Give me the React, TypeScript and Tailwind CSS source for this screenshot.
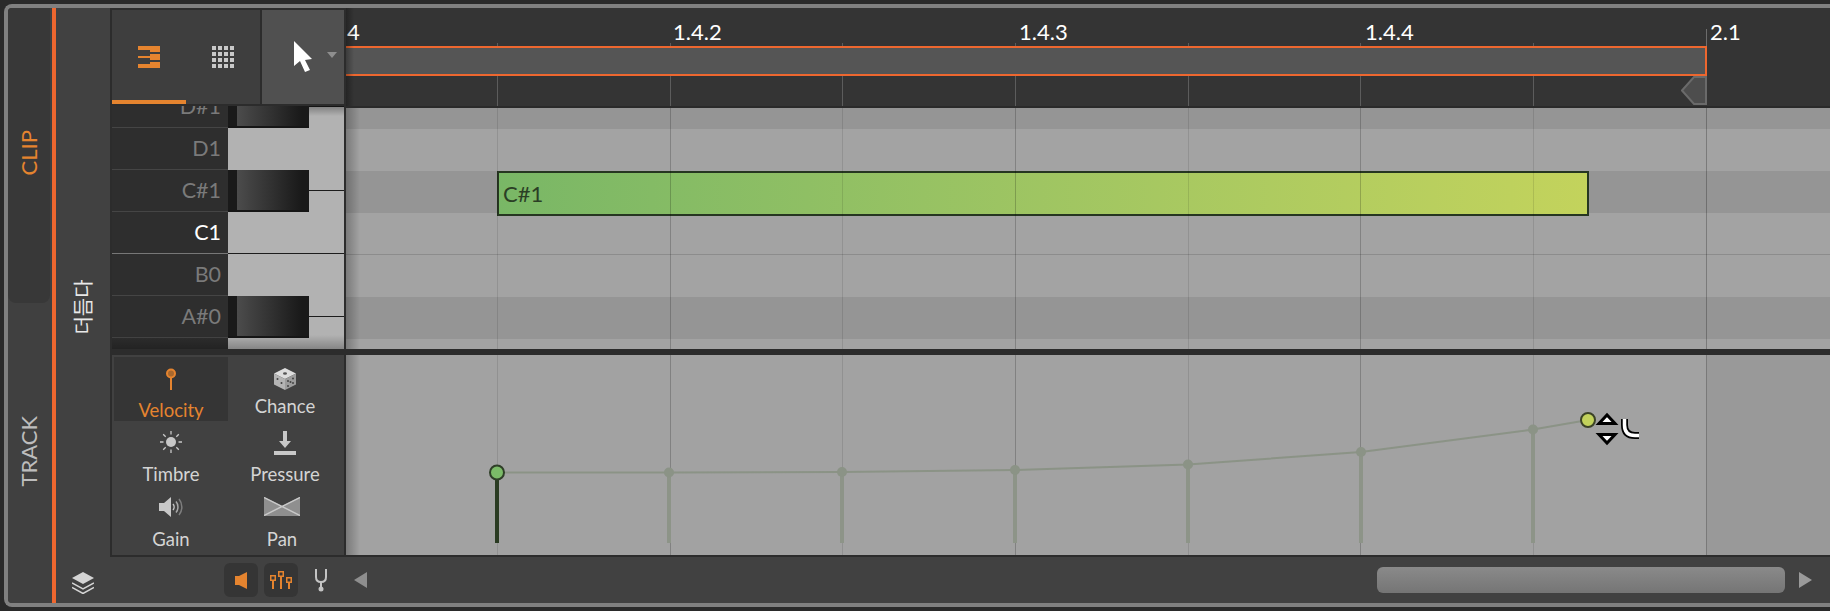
import React from "react";

const rows = [
  { n: "D#1", black: true, cls: "bg-[#959595]" },
  { n: "D1", black: false, cls: "bg-[#a3a3a3]" },
  { n: "C#1", black: true, cls: "bg-[#959595]" },
  { n: "C1", black: false, cls: "bg-[#a3a3a3] border-b border-[#8c8c8c]", active: true },
  { n: "B0", black: false, cls: "bg-[#a3a3a3]" },
  { n: "A#0", black: true, cls: "bg-[#959595]" },
  { n: "", black: false, cls: "bg-[#a3a3a3]" },
];

const gridLines = [
  "bg-black/10", "bg-black/20", "bg-black/10", "bg-black/20",
  "bg-black/10", "bg-black/20", "bg-black/10", "bg-black/25",
];

function GridLines() {
  return (
    <div className="absolute inset-0 flex pl-[151px] pointer-events-none">
      {gridLines.map((c, i) => (
        <div key={i} className="w-[172.7px] shrink-0 h-full">
          <div className={`w-px h-full ${c}`} />
        </div>
      ))}
    </div>
  );
}

function KeyRow({ n, black, active }: { n: string; black: boolean; active?: boolean }) {
  return (
    <div className="flex h-[42px]">
      <div
        className={`w-[116px] bg-[#2e2e2e] flex items-center justify-end pr-[7px] pt-[1px] text-[21.5px] leading-none border-b ${
          active ? "border-[#777777] text-white" : "border-[#454545] text-[#7a7a7a]"
        }`}
      >
        {n}
      </div>
      <div className={`flex-1 flex bg-[#b2b2b2] ${active ? "border-b border-[#1c1c1c]" : ""}`}>
        {black && n ? (
          <>
            <div className="w-[81px] h-full flex border-b-2 border-[#161616] bg-[#1a1a1a]">
              <div className="w-[9px]" />
              <div className="flex-1 bg-gradient-to-r from-[#4c4c4c] via-[#303030] via-50% to-[#191919] to-90%" />
            </div>
            <div className="flex-1 flex flex-col pt-[20px]">
              <div className="h-px bg-[#1c1c1c]" />
            </div>
          </>
        ) : null}
      </div>
    </div>
  );
}

function PianoIcon() {
  return (
    <svg width="22" height="22" viewBox="0 0 22 22" fill="#e5842f">
      <path d="M0 0H22V6H12V4H0Z" />
      <path d="M0 10H12V8H22V14H12V12H0Z" />
      <path d="M0 18H12V16H22V22H0Z" />
    </svg>
  );
}

function GridIcon() {
  const cells: React.ReactNode[] = [];
  for (let r = 0; r < 4; r++)
    for (let c = 0; c < 4; c++)
      cells.push(<rect key={`${r}-${c}`} x={c * 6} y={r * 6} width="4" height="4" />);
  return (
    <svg width="22" height="22" viewBox="0 0 22 22" fill="#c9c9c9">
      {cells}
    </svg>
  );
}

function Tool() {
  return (
    <div className="w-[82px] bg-[#505050] flex items-center pl-[32px] gap-[14px] pb-[4px]">
      <svg width="19" height="31" viewBox="0 0 19 31" fill="#ffffff" className="mt-[2px]">
        <path d="M0 0L18 18L11 19L16 29L11 31L6 20L0 25Z" />
      </svg>
      <svg width="10" height="6" viewBox="0 0 10 6" fill="#8e8e8e">
        <path d="M0 0H10L5 6Z" />
      </svg>
    </div>
  );
}

function Label({ children, className = "text-[#d4d4d4]" }: { children: React.ReactNode; className?: string }) {
  return <div className={`text-[18.5px] leading-[20px] ${className}`}>{children}</div>;
}

function Dice() {
  return (
    <svg width="22" height="22" viewBox="0 0 22 22">
      <path d="M11 0L22 5.5L11 11L0 5.5Z" fill="#dddddd" />
      <path d="M0 5.5L11 11V22L0 16.5Z" fill="#b4b4b4" />
      <path d="M22 5.5L11 11V22L22 16.5Z" fill="#9c9c9c" />
      <ellipse cx="11" cy="5.5" rx="2" ry="1.2" fill="#555" />
      <circle cx="3.5" cy="11" r="1" fill="#444" />
      <circle cx="7.5" cy="15" r="1" fill="#444" />
      <g fill="#444">
        <circle cx="14" cy="13" r="1" />
        <circle cx="19" cy="10.5" r="1" />
        <circle cx="14" cy="18" r="1" />
        <circle cx="19" cy="15" r="1" />
        <circle cx="16.5" cy="14" r="1" />
      </g>
    </svg>
  );
}

function Sun() {
  return (
    <svg width="22" height="22" viewBox="0 0 22 22" stroke="#c8c8c8" strokeWidth="1.3" fill="#c8c8c8">
      <circle cx="11" cy="11" r="5" stroke="none" />
      <path d="M11 0V3.5M11 18.5V22M0 11H3.5M18.5 11H22M3.2 3.2L5.7 5.7M16.3 16.3L18.8 18.8M3.2 18.8L5.7 16.3M16.3 5.7L18.8 3.2" fill="none" />
    </svg>
  );
}

function Pressure() {
  return (
    <svg width="22" height="24" viewBox="0 0 22 24" fill="#c8c8c8">
      <path d="M9 0H13V10H17L11 17L5 10H9Z" />
      <rect x="0" y="20" width="22" height="4" />
    </svg>
  );
}

function Speaker() {
  return (
    <svg width="24" height="20" viewBox="0 0 24 20" fill="none">
      <path d="M0 6H5L12 0V20L5 14H0Z" fill="#c8c8c8" />
      <path d="M14 7C15.4 8.6 15.4 11.4 14 13" stroke="#c8c8c8" strokeWidth="1.5" />
      <path d="M17 4.5C19.6 7.5 19.6 12.5 17 15.5" stroke="#a8a8a8" strokeWidth="1.5" />
      <path d="M20 2C23.8 6.5 23.8 13.5 20 18" stroke="#7e7e7e" strokeWidth="1.5" />
    </svg>
  );
}

function Pan() {
  return (
    <svg width="36" height="19" viewBox="0 0 36 19">
      <path d="M0 0L18 9L36 0V19H0Z" fill="#8f8f8f" />
      <path d="M0 0.5L36 18.5M0 18.5L36 0.5" stroke="#c8c8c8" strokeWidth="1.5" fill="none" />
    </svg>
  );
}

function ValueIcon() {
  return (
    <svg width="12" height="22" viewBox="0 0 12 22" fill="none">
      <circle cx="6" cy="5.5" r="4" stroke="#e5842f" strokeWidth="2" fill="#a8682e" />
      <rect x="5" y="9" width="2" height="13" fill="#e5842f" />
    </svg>
  );
}

function ExpressionPanel() {
  return (
    <div className="h-[202px] bg-[#2c2c2c] pb-[2px]">
      <div className="h-full bg-[#414141] pt-[2px] pl-[2px] grid grid-cols-[114px_114px] grid-rows-[64px_66px_66px]">
        <div className="bg-[#353535] flex flex-col items-center pt-[11px] gap-[10px]">
          <ValueIcon />
          <Label className="text-[#e5842f]">Velocity</Label>
        </div>
        <div className="flex flex-col items-center pt-[11px] gap-[6px]">
          <Dice />
          <Label>Chance</Label>
        </div>
        <div className="flex flex-col items-center pt-[10px] gap-[11px]">
          <Sun />
          <Label>Timbre</Label>
        </div>
        <div className="flex flex-col items-center pt-[10px] gap-[9px]">
          <Pressure />
          <Label>Pressure</Label>
        </div>
        <div className="flex flex-col items-center pt-[10px] gap-[12px]">
          <Speaker />
          <Label>Gain</Label>
        </div>
        <div className="flex flex-col items-center pt-[10px] gap-[13px] pr-[6px]">
          <Pan />
          <Label>Pan</Label>
        </div>
      </div>
    </div>
  );
}

const pts = [
  [151, 117.5],
  [323, 117.5],
  [496, 117],
  [669, 115],
  [842, 109.5],
  [1015, 97],
  [1187, 74.5],
];

function VelocityChart() {
  const line = [...pts, [1242, 65]].map((p) => p.join(",")).join(" ");
  const curve = "M1278.5 64V70C1278.5 77 1282 80.5 1289 80.5H1293";
  return (
    <svg className="absolute inset-0" width="1484" height="200" viewBox="0 0 1484 200" fill="none">
      <polyline points={line} stroke="#8b9386" strokeWidth="2" />
      {pts.slice(1).map(([x, y]) => (
        <g key={x}>
          <rect x={x - 2} y={y} width="4" height={188 - y} fill="#8d9488" />
          <circle cx={x} cy={y} r="5" fill="#8b9386" />
        </g>
      ))}
      <rect x="149" y="117" width="4" height="71" fill="#2a3b22" />
      <circle cx="151" cy="117.5" r="7" fill="#7bbb68" stroke="#2f3f28" strokeWidth="2" />
      <circle cx="1242" cy="65" r="7" fill="#c2d25c" stroke="#3b4226" strokeWidth="2" />
      <g stroke="#000000" strokeWidth="3" fill="#ffffff" strokeLinejoin="miter">
        <path d="M1253 68.5L1261 60L1269 68.5Z" />
        <path d="M1253 79.5L1261 88L1269 79.5Z" />
      </g>
      <path d={curve} stroke="#000000" strokeWidth="7" />
      <path d={curve} stroke="#ffffff" strokeWidth="3.5" />
    </svg>
  );
}

function Ruler() {
  const labels = ["4", "1.4.2", "1.4.3", "1.4.4", "2.1"];
  const widths = ["w-[326px]", "w-[346px]", "w-[346px]", "w-[345px]", "w-[100px]"];
  return (
    <div className="relative h-[100px] shrink-0 bg-[#343434] border-b-2 border-[#2a2a2a] flex flex-col">
      <div className="absolute inset-0 flex pl-[151px] pt-[35px]">
        {gridLines.map((_, i) => (
          <div key={i} className="w-[172.7px] shrink-0 h-full">
            <div className={`w-px h-full ${i === 7 ? "bg-[#6c6c6c] -mt-[14px]" : "bg-[#5c5c5c]"}`} />
          </div>
        ))}
      </div>
      <div className="relative flex h-[38px] pl-px items-center pt-[10px] text-[22px] text-white">
        {labels.map((l, i) => (
          <div key={l} className={`${widths[i]} shrink-0 leading-none`}>
            {l}
          </div>
        ))}
      </div>
      <div className="relative flex">
        <div className="w-[1361px] h-[30px] bg-[#555555] border-y-2 border-r-2 border-[#ee672f] shrink-0" />
      </div>
      <div className="relative flex justify-end w-[1361px]">
        <svg width="26" height="29" viewBox="0 0 26 29" fill="#4d4d4d" stroke="#6a6a6a" strokeWidth="2">
          <path d="M25 1H13L1 14.5L13 28H25Z" />
        </svg>
      </div>
      <div className="absolute left-0 top-0 bottom-0 w-[8px] bg-gradient-to-r from-black/30 to-transparent" />
    </div>
  );
}

export default function App() {
  return (
    <div className="w-[1830px] h-[611px] bg-[#2a2a2a] py-1 pl-1 overflow-hidden [font-family:Lato,'Noto_Sans_CJK_KR',sans-serif]">
      <div className="h-full flex border-y-4 border-l-4 border-[#808080] rounded-l-[8px] bg-[#414141] overflow-hidden">
        {/* side tabs */}
        <div className="w-[44px] shrink-0 flex flex-col bg-[#404040]">
          <div className="w-[42px] h-[295px] shrink-0 bg-[#383838] rounded-b-[8px] flex items-center justify-center pb-[5px]">
            <span className="[writing-mode:vertical-rl] rotate-180 text-[22px] leading-none text-[#e5842f]">CLIP</span>
          </div>
          <div className="flex-1 flex items-center justify-center pb-[4px] pr-[2px]">
            <span className="[writing-mode:vertical-rl] rotate-180 text-[22px] leading-none text-[#bdbdbd]">TRACK</span>
          </div>
        </div>
        <div className="w-[4px] shrink-0 bg-[#ee672f]" />

        <div className="flex-1 min-w-0 flex flex-col">
          <div className="flex h-[549px] shrink-0">
            {/* vertical title */}
            <div className="w-[54px] shrink-0 flex items-center justify-center pt-[48px]">
              <span className="-rotate-90 whitespace-nowrap text-[20px] leading-none text-[#e8e8e8]">더듬다</span>
            </div>

            {/* keyboard column */}
            <div className="w-[236px] shrink-0 flex flex-col bg-[#2c2c2c] px-[2px]">
              <div className="h-[98px] shrink-0 pt-[2px] pb-[2px] flex gap-[2px]">
                <div className="w-[148px] bg-[#3e3e3e] relative flex">
                  <div className="w-[74px] flex items-center justify-center border-b-4 border-[#e5842f] pt-[4px]">
                    <PianoIcon />
                  </div>
                  <div className="w-[74px] flex items-center justify-center">
                    <GridIcon />
                  </div>
                </div>
                <Tool />
              </div>
              <div className="relative h-[243px] shrink-0 overflow-hidden">
                <div className="-mt-[20px]">
                  {rows.map((r) => (
                    <KeyRow key={r.n} n={r.n} black={r.black} active={r.active} />
                  ))}
                </div>
                <div className="absolute right-0 top-0 w-[35px] h-[10px] bg-gradient-to-b from-black/30 to-transparent" />
                <div className="absolute inset-x-0 bottom-0 h-[14px] bg-gradient-to-b from-transparent to-black/25" />
              </div>
              <div className="h-[6px] shrink-0 bg-[#2c2c2c]" />
              <ExpressionPanel />
            </div>

            {/* timeline column */}
            <div className="flex-1 min-w-0 flex flex-col">
              <Ruler />
              <div className="relative h-[241px] shrink-0 overflow-hidden">
                <div className="-mt-[21px]">
                  {rows.map((r) => (
                    <div key={r.n} className={`h-[42px] ${r.cls}`} />
                  ))}
                </div>
                <div className="absolute left-[151px] top-[63px] w-[1092px] h-[45px] bg-gradient-to-r from-[#79b766] to-[#c3d35c] border-2 border-[#263621] flex items-center pl-[4px] text-[22px] leading-none text-[#2b3f25]">
                  C#1
                </div>
                <GridLines />
                <div className="absolute left-0 inset-y-0 w-[14px] bg-gradient-to-r from-black/25 to-transparent" />
              </div>
              <div className="h-[6px] shrink-0 bg-[#2c2c2c]" />
              <div className="relative h-[200px] shrink-0 flex">
                <div className="w-[1361px] shrink-0 bg-[#a2a2a2]" />
                <div className="flex-1 bg-[#999999]" />
                <GridLines />
                <div className="absolute left-0 inset-y-0 w-[14px] bg-gradient-to-r from-black/25 to-transparent" />
                <VelocityChart />
              </div>
              <div className="h-[2px] shrink-0 bg-[#2c2c2c]" />
            </div>
          </div>

          {/* bottom bar */}
          <div className="h-[46px] shrink-0 flex items-center">
            <div className="w-[168px] shrink-0 flex pl-[16px] pt-[6px]">
              <svg width="22" height="22" viewBox="0 0 22 22" fill="none">
                <path d="M11 0L22 6L11 12L0 6Z" fill="#d4d4d4" />
                <path d="M0 11L11 17L22 11" stroke="#d4d4d4" strokeWidth="1.5" />
                <path d="M0 15.5L11 21.5L22 15.5" stroke="#d4d4d4" strokeWidth="1.5" />
              </svg>
            </div>
            <div className="w-[34px] h-[34px] shrink-0 rounded-[6px] bg-[#353535] flex items-center justify-center">
              <svg width="12" height="17" viewBox="0 0 12 17" fill="#e5842f">
                <path d="M0 4H4L12 0V17L4 13H0Z" />
              </svg>
            </div>
            <div className="w-[34px] h-[34px] shrink-0 ml-[6px] rounded-[6px] bg-[#353535] flex items-center justify-center">
              <svg width="22" height="19" viewBox="0 0 22 19" fill="none" stroke="#e5842f">
                <rect x="0.75" y="4.75" width="4.5" height="4.5" strokeWidth="1.5" />
                <path d="M3 9V18" strokeWidth="2" />
                <rect x="8.75" y="0.75" width="4.5" height="4.5" strokeWidth="1.5" />
                <path d="M11 5V18" strokeWidth="2" />
                <rect x="16.75" y="6.75" width="4.5" height="4.5" strokeWidth="1.5" />
                <path d="M19 11V18" strokeWidth="2" />
              </svg>
            </div>
            <div className="ml-[17px] shrink-0">
              <svg width="12" height="23" viewBox="0 0 12 23" fill="none" stroke="#c4c4c4">
                <path d="M1 0V8C1 12 3.5 13 6 13C8.5 13 11 12 11 8V0" strokeWidth="2" />
                <path d="M6 13V20" strokeWidth="2" />
                <circle cx="6" cy="20" r="2.5" fill="#c4c4c4" stroke="none" />
              </svg>
            </div>
            <div className="ml-[27px] shrink-0">
              <svg width="13" height="16" viewBox="0 0 13 16" fill="#8e8e8e">
                <path d="M13 0V16L0 8Z" />
              </svg>
            </div>
            <div className="ml-[1010px] w-[408px] h-[26px] shrink-0 rounded-[6px] bg-gradient-to-b from-[#8a8a8a] to-[#757575]" />
            <div className="ml-[14px] shrink-0">
              <svg width="13" height="16" viewBox="0 0 13 16" fill="#9a9a9a">
                <path d="M0 0V16L13 8Z" />
              </svg>
            </div>
          </div>
        </div>
      </div>
    </div>
  );
}
